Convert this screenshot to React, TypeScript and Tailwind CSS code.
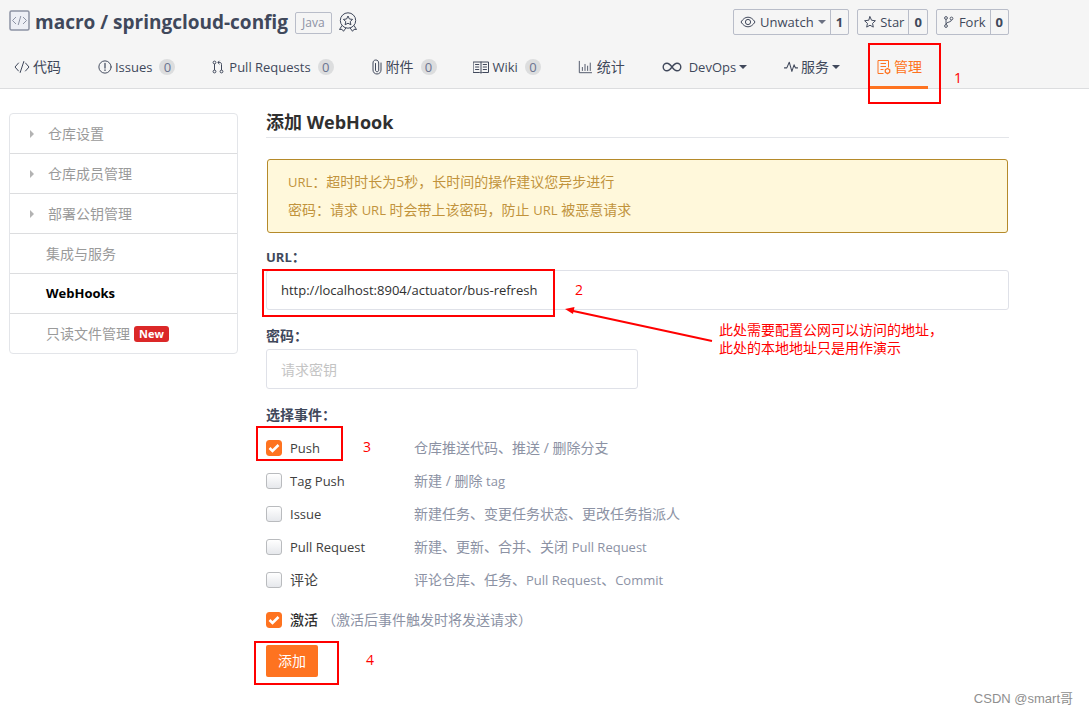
import { useState, type ReactNode } from "react";

function Icon({ children, className = "w-4 h-4" }: { children: ReactNode; className?: string }) {
  return (
    <svg
      viewBox="0 0 16 16"
      className={`shrink-0 ${className}`}
      fill="none"
      stroke="currentColor"
      strokeWidth="1"
      strokeLinecap="round"
      strokeLinejoin="round"
      aria-hidden="true"
    >
      {children}
    </svg>
  );
}

function Caret({ className = "" }: { className?: string }) {
  return (
    <svg viewBox="0 0 8 4" className={`w-2 h-1 shrink-0 ${className}`} fill="currentColor" aria-hidden="true">
      <path d="M0 0h8L4 4z" />
    </svg>
  );
}

const forkIcon = (
  <svg viewBox="0 0 12 12" className="w-3 h-3 shrink-0" fill="none" stroke="currentColor" strokeWidth=".9" aria-hidden="true">
    <circle cx="3" cy="2" r="1.400" />
    <circle cx="8.500" cy="2.500" r="1.400" />
    <circle cx="3" cy="10" r="1.400" />
    <path d="M3 3.400v5.200M8.500 3.900c0 2.800-5 1.600-5.500 4.200" />
  </svg>
);

const starIcon = (
  <Icon className="w-3 h-3">
    <path strokeWidth="1.3" d="M8 1l2.100 4.700 5.100.6-3.800 3.500 1 5L8 12.300l-4.400 2.500 1-5L.8 6.300l5.100-.6z" />
  </Icon>
);

const eyeIcon = (
  <svg viewBox="0 0 16 12" className="w-4 h-3 shrink-0" fill="none" stroke="currentColor" aria-hidden="true">
    <path d="M1 6c2-3.200 4.400-4.800 7-4.800S13 2.800 15 6c-2 3.200-4.400 4.800-7 4.800S3 9.200 1 6z" />
    <circle cx="8" cy="6" r="2.600" />
  </svg>
);

const tabs: { label: string; icon: ReactNode; count?: number; caret?: boolean; cjk?: boolean; active?: boolean }[] = [
  {
    label: "代码",
    cjk: true,
    icon: (
      <Icon>
        <path d="M4.500 4L1 8l3.500 4M11.500 4L15 8l-3.500 4M9.800 2.500l-3.600 11" />
      </Icon>
    ),
  },
  {
    label: "Issues",
    count: 0,
    icon: (
      <Icon className="w-3.5 h-3.5">
        <circle cx="8" cy="8" r="7" strokeWidth="1.1" />
        <path d="M8 3.800v5.400M8 11.200v.8" strokeWidth="1.400" />
      </Icon>
    ),
  },
  {
    label: "Pull Requests",
    count: 0,
    icon: (
      <svg viewBox="0 0 12 14" className="w-3 h-3.5 mr-0.5 shrink-0" fill="none" stroke="currentColor" aria-hidden="true">
        <circle cx="2.500" cy="2.500" r="1.400" />
        <circle cx="2.500" cy="11.500" r="1.400" />
        <circle cx="9.500" cy="11.500" r="1.400" />
        <path d="M2.500 3.900v6.200M9.500 10.100V4.500c0-1.400-.6-2-1.700-2H6M7.500.8L5.800 2.500l1.700 1.700" />
      </svg>
    ),
  },
  {
    label: "附件",
    cjk: true,
    count: 0,
    icon: (
      <svg viewBox="0 0 12 16" className="w-3 h-4 shrink-0" fill="none" stroke="currentColor" strokeLinecap="round" aria-hidden="true">
        <path d="M10 4v7c0 2.300-1.700 4-4 4s-4-1.700-4-4V4c0-1.800 1.100-3 2.800-3s2.900 1.200 2.900 3v7c0 1-.6 1.700-1.600 1.700S4.500 12 4.500 11V4.500" />
      </svg>
    ),
  },
  {
    label: "Wiki",
    count: 0,
    icon: (
      <Icon>
        <path d="M.5 3h15v10.500H9.300L8 14l-1.300-.5H.5zM8 3v10.500M2.500 5.500h3.300M2.500 8h3.300M2.500 10.500h3.300M10.200 5.500h3.300M10.200 8h3.300M10.200 10.500h3.300" />
      </Icon>
    ),
  },
  {
    label: "统计",
    cjk: true,
    icon: (
      <Icon className="w-3.5 h-3.5 mr-0.5">
        <path d="M1.500 1.500v13h14M5 12V8.500M8 12V5M11 12V7M14 12V3.500" />
      </Icon>
    ),
  },
  {
    label: "DevOps",
    caret: true,
    icon: (
      <svg viewBox="0 0 20 10" className="w-5 h-2.5 mr-1 shrink-0" fill="none" stroke="currentColor" strokeWidth="1.400" aria-hidden="true">
        <path d="M10 5C8 2.200 6.800 1.200 5 1.200a3.800 3.800 0 100 7.600C6.800 8.800 8 7.800 10 5s3.200-3.800 5-3.800a3.800 3.800 0 110 7.600c-1.800 0-3-1-5-3.800z" />
      </svg>
    ),
  },
  {
    label: "服务",
    cjk: true,
    caret: true,
    icon: (
      <Icon className="w-3.5 h-3.5">
        <path strokeWidth="1.200" d="M.5 9h2.700L6 2.500 9 13l2.500-7.500L13 9h2.500" />
      </Icon>
    ),
  },
  {
    label: "管理",
    cjk: true,
    active: true,
    icon: (
      <svg viewBox="0 0 14 16" className="w-3.5 h-4 shrink-0" fill="none" stroke="currentColor" strokeLinejoin="round" aria-hidden="true">
        <path d="M6.500 14.500H1V1.500h10.500v7M3.500 4.500H9M3.500 7.500H9M3.500 10.500h3" />
        <path strokeWidth="1.300" d="M10.500 9.500l2.200 1.300v2.500l-2.200 1.300-2.200-1.300v-2.500z" />
      </svg>
    ),
  },
];

const sidebar = [
  { label: "仓库设置", group: true },
  { label: "仓库成员管理", group: true },
  { label: "部署公钥管理", group: true },
  { label: "集成与服务" },
  { label: "WebHooks", active: true },
  { label: "只读文件管理", isNew: true },
];

// Latin words run one step smaller than the Chinese text beside them
const En = ({ children }: { children: ReactNode }) => <span className="text-[13px]">{children}</span>;

const events = [
  { id: "push", label: <En>Push</En>, note: "仓库推送代码、推送 / 删除分支" },
  { id: "tag", label: <En>Tag Push</En>, note: <>新建 / 删除 <En>tag</En></> },
  { id: "issue", label: <En>Issue</En>, note: "新建任务、变更任务状态、更改任务指派人" },
  { id: "pull", label: <En>Pull Request</En>, note: <>新建、更新、合并、关闭 <En>Pull Request</En></> },
  { id: "comment", label: "评论", note: <>评论仓库、任务、<En>Pull Request</En>、<En>Commit</En></> },
];

function CountButton({ icon, label, count, caret }: { icon: ReactNode; label: string; count: number; caret?: boolean }) {
  return (
    <div className="flex h-[26px] border border-[#b9bdc9] rounded-xs text-[13px]">
      <button className="flex items-center gap-1 pl-1.5 pr-1">
        {icon}
        {label}
        {caret && <Caret className="text-[#6b7182]" />}
      </button>
      <a href="#" className="flex items-center px-[5px] border-l border-[#b9bdc9] font-bold">
        {count}
      </a>
    </div>
  );
}

function Checkbox({ id, checked, onChange }: { id: string; checked: boolean; onChange: () => void }) {
  return (
    <span className="grid w-4 h-4 shrink-0">
      <input
        id={id}
        type="checkbox"
        checked={checked}
        onChange={onChange}
        className="col-start-1 row-start-1 appearance-none w-4 h-4 rounded-[3px] border border-[#b9bbbe] bg-linear-to-b from-white to-[#e6e8ec] checked:border-[#fe7320] checked:from-[#fe7320] checked:to-[#fe7320]"
      />
      {checked && (
        <svg viewBox="0 0 16 16" className="col-start-1 row-start-1 pointer-events-none" fill="none" stroke="white" strokeWidth="2.600" aria-hidden="true">
          <path d="M3.500 8l3 3 6-6" />
        </svg>
      )}
    </span>
  );
}

function Mark({ className, children }: { className: string; children?: ReactNode }) {
  return <span className={`absolute pointer-events-none text-[#ff0000] text-sm leading-[18px] ${className}`}>{children}</span>;
}

export default function App() {
  const [url, setUrl] = useState("http://localhost:8904/actuator/bus-refresh");
  const [secret, setSecret] = useState("");
  const [checked, setChecked] = useState<string[]>(["push", "active"]);

  const toggle = (id: string) =>
    setChecked((prev) => (prev.includes(id) ? prev.filter((x) => x !== id) : [...prev, id]));

  return (
    <div className="bg-white text-[#40485b] text-sm font-['Open_Sans','Noto_Sans_CJK_SC',sans-serif]">
      <header className="bg-[#f5f5f5] border-b border-[#dcdddf]">
        <div className="max-w-[1009px] pl-[9px]">
          <div className="flex items-center justify-between h-11">
            <div className="flex items-center">
              <svg viewBox="0 0 21 21" className="w-[21px] h-[21px] mb-1 text-[#8c92a4]" fill="none" stroke="currentColor" aria-hidden="true">
                <rect x="1" y="1" width="19" height="19" rx="1.500" fill="#eceef5" strokeWidth="1.500" />
                <path d="M7 7l-3.500 3.500L7 14M14 7l3.500 3.500L14 14M11.800 6l-2.600 9" />
              </svg>
              <h1 className="px-[5px] text-[19px] leading-6 font-bold">
                <a href="#">macro</a> / <a href="#">springcloud-config</a>
              </h1>
              <a href="#" className="ml-0.5 mt-0.5 flex items-center h-[22px] px-1.5 border border-[#b9bdc9] rounded-xs text-xs text-[#8c92a4]">
                Java
              </a>
              <svg viewBox="0 0 20 20" className="w-5 h-5 ml-1.5" fill="none" stroke="currentColor" strokeLinejoin="round" aria-hidden="true">
                <circle cx="10" cy="8.500" r="7.700" />
                <path d="M10 4l1.400 3 3.200.4-2.400 2.200.7 3.200-2.900-1.600-2.900 1.600.7-3.200-2.400-2.200 3.200-.4zM4 13.500l-2.500 4 2.500-.2 1.500 2 2.500-3.500M16 13.500l2.500 4-2.500-.2-1.500 2-2.500-3.500" />
              </svg>
            </div>
            <div className="flex gap-2">
              <CountButton icon={eyeIcon} label="Unwatch" count={1} caret />
              <CountButton icon={starIcon} label="Star" count={0} />
              <CountButton icon={forkIcon} label="Fork" count={0} />
            </div>
          </div>

          <nav className="flex justify-between h-11 pt-0.5 pl-[5px] pr-[87px]">
            {tabs.map((tab) => (
              <a
                key={tab.label}
                href="#"
                className={`relative flex items-center gap-[3px] ${tab.cjk ? "text-sm" : "text-[13px]"} ${tab.active ? "text-[#fe7320]" : ""}`}
              >
                {tab.icon}
                {tab.label}
                {tab.count !== undefined && (
                  <span className="ml-1 flex items-center justify-center w-4 h-4 rounded-full bg-[#dcddde] text-[#6b7490] text-[13px]">
                    {tab.count}
                  </span>
                )}
                {tab.caret && <Caret />}
                {tab.active && (
                  <>
                    <span className="absolute -left-2 -right-1.5 -bottom-px h-[3px] bg-[#fe7320]" />
                    <Mark className="-left-[9px] -top-[3px] w-[73px] h-[61px] border-2 border-[#ff0000]" />
                    <Mark className="left-[77px] top-[23px]">1</Mark>
                  </>
                )}
              </a>
            ))}
          </nav>
        </div>
      </header>

      <div className="flex gap-7 max-w-[1009px] pl-[9px] pt-6">
        <aside className="w-[229px] shrink-0">
          <ul className="border border-[#e3e5e9] rounded-sm">
            {sidebar.map((item) => (
              <li key={item.label} className="h-10 border-b border-[#dcdddf] last:h-[39px] last:border-b-0">
                <a
                  href="#"
                  className={`flex items-center h-full ${item.group ? "pl-5" : "pl-9"} ${item.active ? "text-[13px] font-bold text-black" : "text-[#9a9a9a]"}`}
                >
                  {item.group && (
                    <svg viewBox="0 0 4 8" className="w-1 h-2 mr-3.5" fill="#b3b3b3" aria-hidden="true">
                      <path d="M0 0l4 4-4 4z" />
                    </svg>
                  )}
                  {item.label}
                  {item.isNew && (
                    <span className="ml-1 px-[5px] rounded-[3px] bg-[#db2828] text-white text-[11px] leading-4 font-bold">New</span>
                  )}
                </a>
              </li>
            ))}
          </ul>
        </aside>

        <main className="flex-1 min-w-0">
          <h2 className="h-[25px] border-b border-[#e3e5e9] text-lg leading-[18px] font-bold text-[#303030]">添加 WebHook</h2>

          <div className="mt-[21px] mx-px h-[74px] px-5 py-2 border border-[#b58a2a] rounded-[3px] bg-[#fff8db] text-[#c1933c] leading-7">
            <p><En>URL</En>：超时时长为5秒，长时间的操作建议您异步进行</p>
            <p>密码：请求 <En>URL</En> 时会带上该密码，防止 <En>URL</En> 被恶意请求</p>
          </div>

          <form onSubmit={(e) => e.preventDefault()}>
            <label htmlFor="url" className="block mt-3.5 leading-5 font-bold"><En>URL</En>：</label>
            <div className="relative mt-[3px]">
              <input
                id="url"
                value={url}
                onChange={(e) => setUrl(e.target.value)}
                className="block w-full h-10 px-3.5 border border-[#dfe1e8] rounded-[3px] text-[13px] text-[#303030] outline-none"
              />
              <Mark className="-left-1 -top-px w-[293px] h-12 border-2 border-[#ff0000]" />
              <Mark className="left-[309px] top-[11px]">2</Mark>
              <svg viewBox="0 0 148 36" className="absolute left-[299px] top-[37px] w-[148px] h-9 pointer-events-none" aria-hidden="true">
                <path d="M6 3.500L147 34" stroke="#ff0000" strokeWidth="2" />
                <path d="M0 2l9.500-2L8 7z" fill="#ff0000" />
              </svg>
              <Mark className="left-[453px] top-[51px] whitespace-nowrap">
                此处需要配置公网可以访问的地址，
                <br />
                此处的本地地址只是用作演示
              </Mark>
            </div>

            <label htmlFor="secret" className="block mt-4 leading-5 font-bold">密码：</label>
            <input
              id="secret"
              value={secret}
              onChange={(e) => setSecret(e.target.value)}
              placeholder="请求密钥"
              className="block mt-[3px] w-1/2 h-10 px-3.5 border border-[#dfe1e8] rounded-[3px] placeholder:text-[#c4c4c4] outline-none"
            />

            <fieldset>
              <legend className="pt-4 leading-5 font-bold">选择事件：</legend>
              <div className="pt-1.5">
                {events.map((event) => (
                  <div key={event.id} className="relative flex items-center h-[33px]">
                    <Checkbox id={event.id} checked={checked.includes(event.id)} onChange={() => toggle(event.id)} />
                    <label htmlFor={event.id} className="w-[132px] pl-2 text-[#404040]">{event.label}</label>
                    <span className="text-[#8c92a4]">{event.note}</span>
                    {event.id === "push" && (
                      <>
                        <Mark className="-left-2.5 -top-[5px] w-[87px] h-[35px] border-2 border-[#ff0000]" />
                        <Mark className="left-[97px] top-[7px]">3</Mark>
                      </>
                    )}
                  </div>
                ))}
              </div>
            </fieldset>

            <div className="flex items-center h-8 mt-2">
              <Checkbox id="active" checked={checked.includes("active")} onChange={() => toggle("active")} />
              <label htmlFor="active" className="pl-2 font-medium text-[#303030]">激活</label>
              <span className="pl-1 text-[#8c92a4]">（激活后事件触发时将发送请求）</span>
            </div>

            <div className="relative mt-[9px]">
              <button type="submit" className="block h-8 px-3 rounded-xs bg-[#fe7320] text-white">添加</button>
              <Mark className="-left-3 -top-1 w-[85px] h-11 border-2 border-[#ff0000]" />
              <Mark className="left-[100px] top-1.5">4</Mark>
            </div>
          </form>
        </main>
      </div>

      <footer className="pt-3 pr-4 text-right text-[13px] leading-5 text-[#8f8f8f] font-['Liberation_Sans','Noto_Sans_CJK_SC',sans-serif]">
        CSDN @smart哥
      </footer>
    </div>
  );
}
